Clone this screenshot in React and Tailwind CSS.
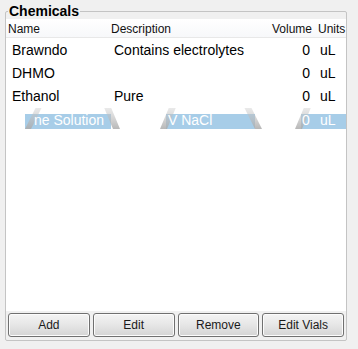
import React from 'react';

const rows = [
  { name: 'Brawndo', description: 'Contains electrolytes', volume: 0, units: 'uL' },
  { name: 'DHMO', description: '', volume: 0, units: 'uL' },
  { name: 'Ethanol', description: 'Pure', volume: 0, units: 'uL' },
];

// gray drag "ghost" edges over the selected row (x in table coords, y in row coords)
const ghosts = [
  '31,-3 37,-3 25,21 19,21',
  '97,-3 104,-3 114,21 107,21',
  '164,-3 171,-3 161,21 154,21',
  '237,-3 244,-3 256,21 249,21',
  '299,-3 306,-3 296,21 289,21',
];

function Button({ children }) {
  return (
    <button className="h-[24px] flex-1 rounded-[3px] border border-[#707070] bg-gradient-to-b from-[#f4f4f4] via-[#e6e6e6] to-[#d4d4d4] text-[12px] text-[#1a1a1a] shadow-[inset_0_0_0_1px_#fcfcfc]">
      {children}
    </button>
  );
}

export default function App() {
  return (
    <div className="h-[349px] w-[358px] bg-[#f0f0f0] pt-[3px] pl-[5px] font-['Liberation_Sans',Arial,sans-serif] text-black">
      <fieldset className="w-[342px] h-[338px] border border-[#c4c4c4] rounded-[2px] px-0 pb-[2px]">
        <legend className="ml-[2px] px-[1px] text-[14px] font-bold leading-[16px]">Chemicals</legend>

        <div className="h-[292px] bg-white">
          {/* header */}
          <div className="flex h-[19px] items-center pt-[1px] border-b border-[#e8e8e8] bg-gradient-to-b from-white to-[#f7f8fa] text-[12px] text-[#111]">
            <div className="w-[102px] pl-[2px]">Name</div>
            <div className="w-[161px] pl-[3px]">Description</div>
            <div className="w-[46px] pl-[3px]">Volume</div>
            <div className="w-[31px] pl-[3px]">Units</div>
          </div>

          <div className="pt-[1px]">
            {rows.map((r) => (
              <div key={r.name} className="flex h-[23px] items-center text-[14px]">
                <div className="w-[102px] pl-[6px]">{r.name}</div>
                <div className="w-[161px] pl-[6px]">{r.description}</div>
                <div className="w-[46px] pr-[5px] text-right">{r.volume}</div>
                <div className="w-[31px] pl-[5px]">{r.units}</div>
              </div>
            ))}

            {/* selected row being dragged */}
            <div className="relative h-[23px] text-[14px] text-white">
              <div className="absolute left-[19px] top-[6px] h-[15px] w-[86px] bg-[#a7cde8]" />
              <div className="absolute left-[160px] top-[6px] h-[15px] w-[89px] bg-[#a7cde8]" />
              <div className="absolute left-[295px] top-[6px] h-[15px] w-[45px] bg-[#a7cde8]" />
              <svg className="absolute left-0 top-0" width="340" height="23" viewBox="0 0 340 23">
                <defs>
                  <linearGradient id="gh" x1="0" y1="0" x2="0" y2="1">
                    <stop offset="0" stopColor="#cfcfcf" stopOpacity="0.35" />
                    <stop offset="1" stopColor="#ababab" stopOpacity="0.85" />
                  </linearGradient>
                </defs>
                {ghosts.map((p) => (
                  <polygon key={p} points={p} fill="url(#gh)" />
                ))}
              </svg>
              <span className="absolute left-[28px] top-[4px] leading-[17px]">ne Solution</span>
              <span className="absolute left-[162px] top-[4px] leading-[17px]">V NaCl</span>
              <span className="absolute left-[296px] top-[4px] leading-[17px]">0</span>
              <span className="absolute left-[314px] top-[4px] leading-[17px]">uL</span>
            </div>
          </div>
        </div>

        <div className="mt-[2px] flex gap-[3px] px-[2px]">
          <Button>Add</Button>
          <Button>Edit</Button>
          <Button>Remove</Button>
          <Button>Edit Vials</Button>
        </div>
      </fieldset>
    </div>
  );
}
